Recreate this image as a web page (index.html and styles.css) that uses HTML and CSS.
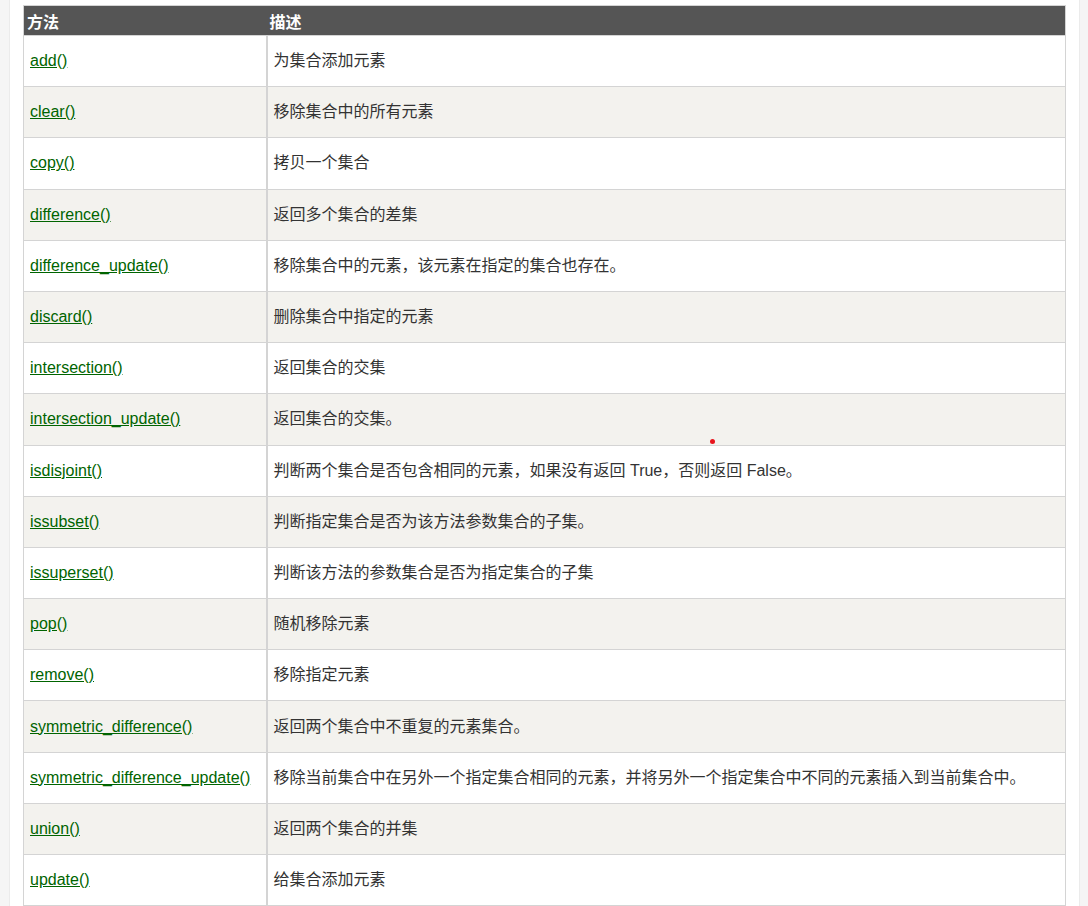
FILE: index.html
```html
<!DOCTYPE html>
<html lang="zh">
<head>
<meta charset="utf-8">
<title>集合方法</title>
<link rel="stylesheet" href="styles.css">
</head>
<body>
<div class="page">
  <table class="ref">
    <thead>
      <tr><th class="c1">方法</th><th>描述</th></tr>
    </thead>
    <tbody>
      <tr><td class="c1"><a href="#">add()</a></td><td>为集合添加元素</td></tr>
      <tr><td class="c1"><a href="#">clear()</a></td><td>移除集合中的所有元素</td></tr>
      <tr><td class="c1"><a href="#">copy()</a></td><td>拷贝一个集合</td></tr>
      <tr><td class="c1"><a href="#">difference()</a></td><td>返回多个集合的差集</td></tr>
      <tr><td class="c1"><a href="#">difference_update()</a></td><td>移除集合中的元素，该元素在指定的集合也存在。</td></tr>
      <tr><td class="c1"><a href="#">discard()</a></td><td>删除集合中指定的元素</td></tr>
      <tr><td class="c1"><a href="#">intersection()</a></td><td>返回集合的交集</td></tr>
      <tr><td class="c1"><a href="#">intersection_update()</a></td><td>返回集合的交集。</td></tr>
      <tr><td class="c1"><a href="#">isdisjoint()</a></td><td>判断两个集合是否包含相同的元素，如果没有返回 True，否则返回 False。</td></tr>
      <tr><td class="c1"><a href="#">issubset()</a></td><td>判断指定集合是否为该方法参数集合的子集。</td></tr>
      <tr><td class="c1"><a href="#">issuperset()</a></td><td>判断该方法的参数集合是否为指定集合的子集</td></tr>
      <tr><td class="c1"><a href="#">pop()</a></td><td>随机移除元素</td></tr>
      <tr><td class="c1"><a href="#">remove()</a></td><td>移除指定元素</td></tr>
      <tr><td class="c1"><a href="#">symmetric_difference()</a></td><td>返回两个集合中不重复的元素集合。</td></tr>
      <tr><td class="c1"><a href="#">symmetric_difference_update()</a></td><td>移除当前集合中在另外一个指定集合相同的元素，并将另外一个指定集合中不同的元素插入到当前集合中。</td></tr>
      <tr><td class="c1"><a href="#">union()</a></td><td>返回两个集合的并集</td></tr>
      <tr><td class="c1"><a href="#">update()</a></td><td>给集合添加元素</td></tr>
    </tbody>
  </table>
</div>
<span class="dot"></span>
</body>
</html>
```

FILE: styles.css
```css
html, body {
  margin: 0;
  padding: 0;
}
body {
  background: #f5f5f5;
  font-family: "Liberation Sans", Arial, "Noto Sans CJK SC", sans-serif;
  font-size: 16px;
  color: #333;
  height: 906px;
  overflow: hidden;
  position: relative;
}
.page {
  margin-left: 9px;
  width: 1044px;
  background: #fff;
  border-left: 1px solid #ebebeb;
  border-right: 1px solid #ebebeb;
  padding: 5px 12px 0 13px;
  min-height: 906px;
}
.ref {
  width: 1043px;
  border-collapse: collapse;
  border: 1px solid #d4d4d4;
  table-layout: fixed;
}
.ref th {
  background: #555;
  color: #fff;
  font-family: "Noto Sans CJK SC", sans-serif;
  font-weight: bold;
  font-size: 16px;
  text-align: left;
  height: 29px;
  padding: 0 3px;
  line-height: 20px;
  border: none;
}
.ref th.c1 {
  width: 243px;
  box-sizing: border-box;
}
.ref td {
  height: 51.2px;
  box-sizing: border-box;
  padding: 0 6px;
  border-top: 1px solid #d4d4d4;
  line-height: 20px;
  vertical-align: middle;
  white-space: nowrap;
}
.ref td.c1 {
  border-right: 2px solid #d4d4d4;
  padding-right: 0;
}
.ref tbody tr:nth-child(even) td {
  background: #f3f2ee;
}
.ref a {
  color: #006400;
  text-decoration: underline;
}
.dot {
  position: absolute;
  left: 710px;
  top: 439px;
  width: 5px;
  height: 5px;
  border-radius: 50%;
  background: #e8141c;
}
```
